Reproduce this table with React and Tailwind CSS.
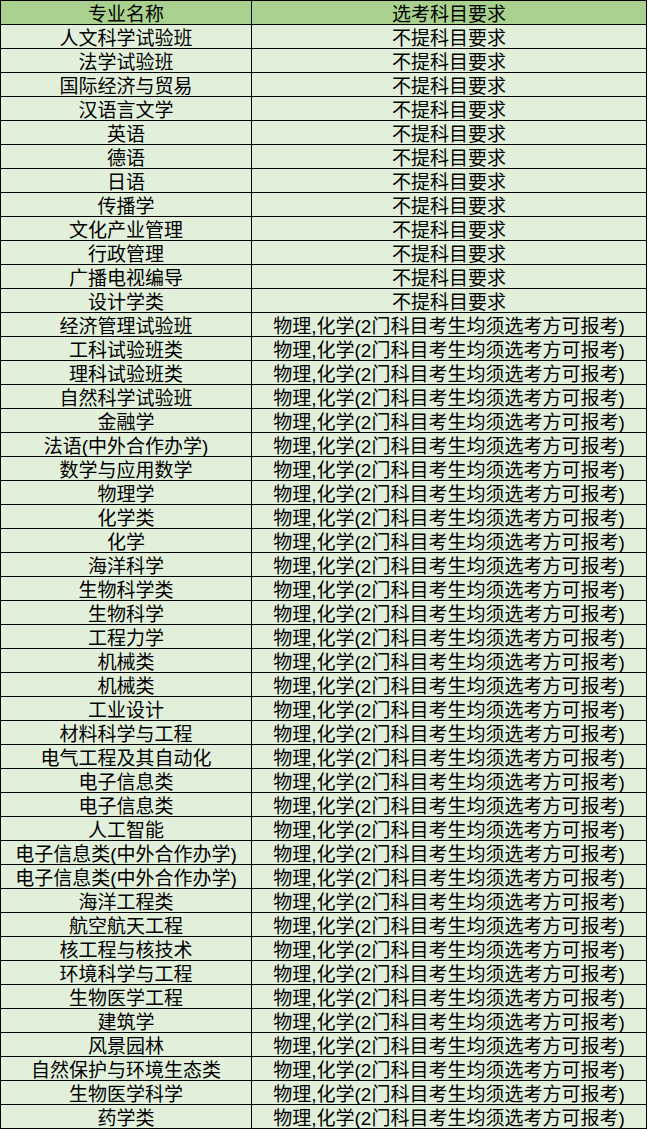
import React from "react";

const noReq = "不提科目要求";
const phyChem = "物理,化学(2门科目考生均须选考方可报考)";

const rows = [
  ["人文科学试验班", noReq],
  ["法学试验班", noReq],
  ["国际经济与贸易", noReq],
  ["汉语言文学", noReq],
  ["英语", noReq],
  ["德语", noReq],
  ["日语", noReq],
  ["传播学", noReq],
  ["文化产业管理", noReq],
  ["行政管理", noReq],
  ["广播电视编导", noReq],
  ["设计学类", noReq],
  ["经济管理试验班", phyChem],
  ["工科试验班类", phyChem],
  ["理科试验班类", phyChem],
  ["自然科学试验班", phyChem],
  ["金融学", phyChem],
  ["法语(中外合作办学)", phyChem],
  ["数学与应用数学", phyChem],
  ["物理学", phyChem],
  ["化学类", phyChem],
  ["化学", phyChem],
  ["海洋科学", phyChem],
  ["生物科学类", phyChem],
  ["生物科学", phyChem],
  ["工程力学", phyChem],
  ["机械类", phyChem],
  ["机械类", phyChem],
  ["工业设计", phyChem],
  ["材料科学与工程", phyChem],
  ["电气工程及其自动化", phyChem],
  ["电子信息类", phyChem],
  ["电子信息类", phyChem],
  ["人工智能", phyChem],
  ["电子信息类(中外合作办学)", phyChem],
  ["电子信息类(中外合作办学)", phyChem],
  ["海洋工程类", phyChem],
  ["航空航天工程", phyChem],
  ["核工程与核技术", phyChem],
  ["环境科学与工程", phyChem],
  ["生物医学工程", phyChem],
  ["建筑学", phyChem],
  ["风景园林", phyChem],
  ["自然保护与环境生态类", phyChem],
  ["生物医学科学", phyChem],
  ["药学类", phyChem],
];

const Cell = ({ children, wide }) => (
  <div
    className={`h-6 pt-[3px] border-r border-b border-black flex items-center justify-center whitespace-nowrap overflow-hidden ${
      wide ? "w-[395px]" : "w-[251px]"
    }`}
  >
    {children}
  </div>
);

const App = () => {
  return (
    <div
      className="w-[647px] border-l border-t border-black text-[19px] leading-[19px] text-black"
      style={{ fontFamily: '"Liberation Sans", "Noto Sans CJK SC", sans-serif' }}
    >
      <div className="flex bg-[#a9d08e]">
        <Cell>专业名称</Cell>
        <Cell wide>选考科目要求</Cell>
      </div>
      {rows.map((r, i) => (
        <div key={i} className="flex bg-[#e2efda]">
          <Cell>{r[0]}</Cell>
          <Cell wide>{r[1]}</Cell>
        </div>
      ))}
    </div>
  );
};

export default App;
